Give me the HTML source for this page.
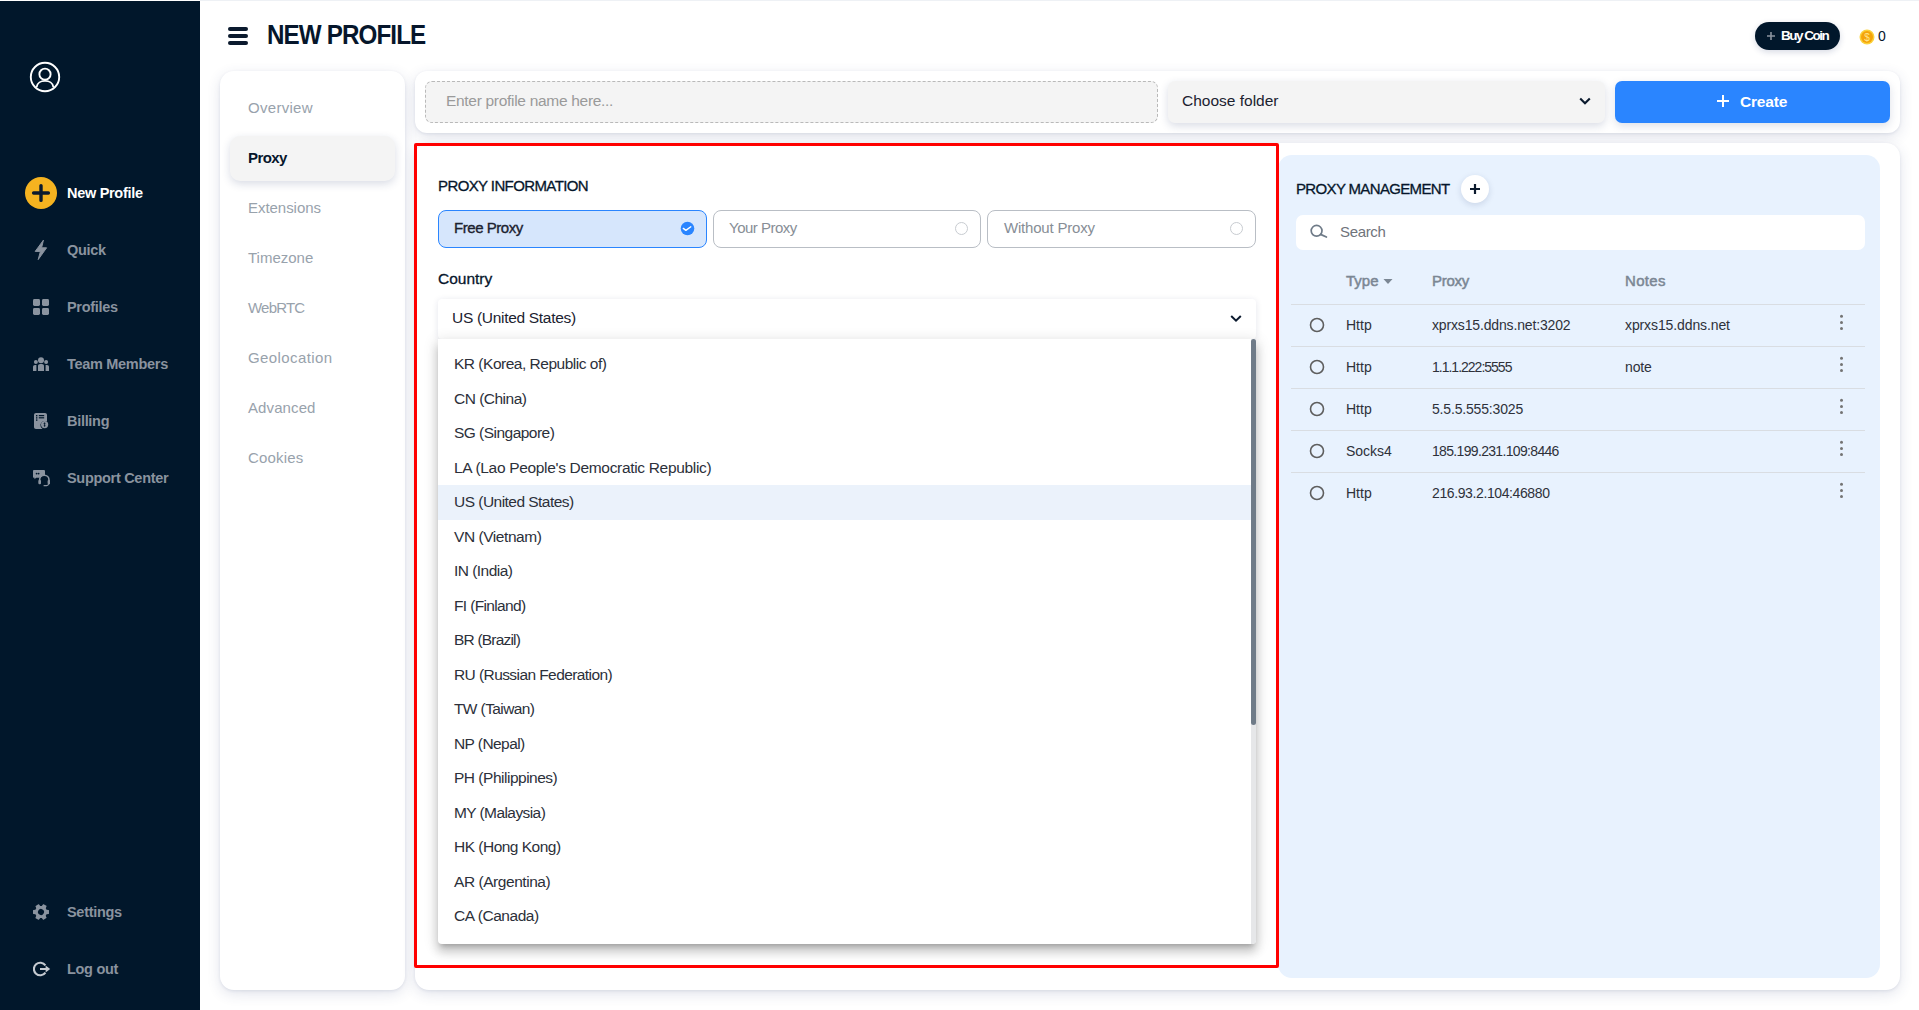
<!DOCTYPE html>
<html><head><meta charset="utf-8">
<style>
*{box-sizing:border-box;margin:0;padding:0}
html,body{width:1919px;height:1010px;overflow:hidden;background:#fff;font-family:"Liberation Sans",sans-serif;position:relative}
.a{position:absolute}
.t{position:absolute;white-space:nowrap;line-height:20px;height:20px}
#side{left:0;top:1px;width:200px;height:1009px;background:#01172b}
.sb{color:#8a939f;font-weight:bold;font-size:14.5px;left:67px;letter-spacing:-0.3px}
.card{background:#fff;border-radius:14px;box-shadow:0 1px 3px rgba(50,65,120,0.10),0 4px 14px rgba(50,65,120,0.14)}
.nav{color:#98a2ac;font-size:15px;left:248px;letter-spacing:0.1px}
</style></head><body>
<div class="a" style="left:200px;top:0;width:1719px;height:1px;background:#eef1f5"></div>
<div id="side" class="a"></div>


<!-- sidebar -->
<svg class="a" style="left:29px;top:61px" width="32" height="32" viewBox="0 0 32 32"><circle cx="16" cy="16" r="14.2" fill="none" stroke="#fff" stroke-width="1.9"/><circle cx="16" cy="13.2" r="5.6" fill="none" stroke="#fff" stroke-width="1.9"/><path d="M7.6 26.2 C8.6 17.8 23.4 17.8 24.4 26.2" fill="none" stroke="#fff" stroke-width="1.9"/></svg>
<svg class="a" style="left:25px;top:177px" width="32" height="32" viewBox="0 0 32 32"><circle cx="16" cy="16" r="16" fill="#f5b320"/><path d="M8.6 16H23.4M16 8.6V23.4" stroke="#0b1a2e" stroke-width="3.4" stroke-linecap="round"/></svg>
<div class="t" style="left:67px;top:183px;color:#fff;font-weight:bold;font-size:14.5px;letter-spacing:-0.3px">New Profile</div>

<svg class="a" style="left:34px;top:239px" width="14" height="22" viewBox="0 0 14 22"><path d="M9.4 1.2 L1.2 12.4 H6.4 L4.2 20.6 L12.6 8.8 H7.6 Z" fill="#8a939f" stroke="#8a939f" stroke-width="1" stroke-linejoin="round"/></svg>
<div class="t sb" style="top:240px">Quick</div>

<svg class="a" style="left:33px;top:299px" width="16" height="16" viewBox="0 0 16 16"><rect x="0" y="0" width="7" height="7" rx="1.4" fill="#8a939f"/><rect x="9" y="0" width="7" height="7" rx="1.4" fill="#8a939f"/><rect x="0" y="9" width="7" height="7" rx="1.4" fill="#8a939f"/><rect x="9" y="9" width="7" height="7" rx="1.4" fill="#8a939f"/></svg>
<div class="t sb" style="top:297px">Profiles</div>

<svg class="a" style="left:33px;top:357px" width="16" height="14" viewBox="0 0 16 14"><circle cx="8" cy="3.3" r="3" fill="#8a939f"/><circle cx="2.9" cy="5" r="2" fill="#8a939f"/><circle cx="13.1" cy="5" r="2" fill="#8a939f"/><path d="M5 14V9.2C5 7.8 5.8 7 7.2 7H8.8C10.2 7 11 7.8 11 9.2V14Z" fill="#8a939f"/><path d="M0 14V10C0 8.6 .8 7.9 2 7.9H3.4V14Z" fill="#8a939f"/><path d="M16 14V10C16 8.6 15.2 7.9 14 7.9H12.6V14Z" fill="#8a939f"/></svg>
<div class="t sb" style="top:354px">Team Members</div>

<svg class="a" style="left:34px;top:413px" width="16" height="17" viewBox="0 0 16 17"><path d="M2 0H11C12.2 0 13 .8 13 2V8.5A4.3 4.3 0 0 0 8.6 16H2C.8 16 0 15.2 0 14V2C0 .8.8 0 2 0Z" fill="#8a939f"/><rect x="2" y="2" width="1.4" height="1.4" fill="#01172b"/><rect x="2" y="4.2" width="1.4" height="1.4" fill="#01172b"/><rect x="2" y="6.4" width="1.4" height="1.4" fill="#01172b"/><rect x="4.8" y="2" width="5.4" height="1.2" fill="#01172b"/><rect x="4.8" y="4.2" width="5.4" height="1.2" fill="#01172b"/><circle cx="10.6" cy="11.6" r="3.6" fill="#8a939f"/><path d="M10.6 9.4V13.8M9.6 10.6H11.4M9.8 12.6H11.4" stroke="#01172b" stroke-width=".8"/></svg>
<div class="t sb" style="top:411px">Billing</div>

<svg class="a" style="left:33px;top:470px" width="17" height="17" viewBox="0 0 17 17"><path d="M1 0H10.8C11.5 0 12 .5 12 1.2V5.2C10 5.3 8.6 6.2 7.5 7.8H3.2L1.5 9.2V7.8H1C.4 7.8 0 7.4 0 6.8V1.2C0 .5.4 0 1 0Z" fill="#8a939f"/><circle cx="3.6" cy="3.6" r=".9" fill="#01172b"/><circle cx="5.6" cy="3.6" r=".9" fill="#01172b"/><path d="M6.6 13V10A4.7 4.7 0 0 1 16 10V13" fill="none" stroke="#8a939f" stroke-width="1.6"/><rect x="5.4" y="10" width="2.6" height="4.2" rx="1" fill="#8a939f"/><rect x="14.6" y="10" width="2.6" height="4.2" rx="1" fill="#8a939f"/><path d="M15.6 14A2 2 0 0 1 13.6 15.6H10.6" fill="none" stroke="#8a939f" stroke-width="1.2"/></svg>
<div class="t sb" style="top:468px">Support Center</div>

<svg class="a" style="left:31px;top:902px" width="20" height="20" viewBox="0 0 24 24"><path transform="rotate(30 12 12)" fill="#8a939f" d="M19.14 12.94c.04-.3.06-.61.06-.94 0-.32-.02-.64-.07-.94l2.03-1.58a.49.49 0 0 0 .12-.61l-1.92-3.32a.49.49 0 0 0-.59-.22l-2.39.96c-.5-.38-1.03-.7-1.62-.94l-.36-2.54a.48.48 0 0 0-.48-.41h-3.84c-.24 0-.43.17-.47.41l-.36 2.54c-.59.24-1.13.57-1.62.94l-2.39-.96a.48.48 0 0 0-.59.22L2.74 8.87c-.12.21-.08.47.12.61l2.03 1.58c-.05.3-.09.63-.09.94s.02.64.07.94l-2.03 1.58a.49.49 0 0 0-.12.61l1.92 3.32c.12.22.37.29.59.22l2.39-.96c.5.38 1.03.7 1.62.94l.36 2.54c.05.24.24.41.48.41h3.84c.24 0 .44-.17.47-.41l.36-2.54c.59-.24 1.13-.56 1.62-.94l2.39.96c.22.08.47 0 .59-.22l1.92-3.32c.12-.22.07-.47-.12-.61l-2.01-1.58zM12 15.6A3.6 3.6 0 1 1 12 8.4a3.6 3.6 0 0 1 0 7.2z"/></svg>
<div class="t sb" style="top:902px">Settings</div>

<svg class="a" style="left:33px;top:961px" width="18" height="16" viewBox="0 0 18 16"><path d="M12.4 4.4A6.3 6.3 0 1 0 12.4 11.6" fill="none" stroke="#c5cad1" stroke-width="2.1"/><path d="M7 8H13" stroke="#c5cad1" stroke-width="2"/><path d="M12.6 4.6L17.2 8L12.6 11.4Z" fill="#c5cad1"/></svg>
<div class="t sb" style="top:959px">Log out</div>

<!-- header -->
<div class="a" style="left:228px;top:27px;width:20px;height:4px;border-radius:2px;background:#0b1a2e"></div>
<div class="a" style="left:228px;top:34px;width:20px;height:4px;border-radius:2px;background:#0b1a2e"></div>
<div class="a" style="left:228px;top:41px;width:20px;height:4px;border-radius:2px;background:#0b1a2e"></div>
<div class="t" style="left:267px;top:21px;height:28px;line-height:28px;font-size:27.5px;font-weight:bold;color:#06162b;letter-spacing:-1px;transform:scaleX(0.88);transform-origin:0 0">NEW PROFILE</div>

<!-- cards -->
<div class="a card" style="left:220px;top:71px;width:185px;height:919px"></div>
<div class="a card" style="left:415px;top:71px;width:1485px;height:62px;border-radius:12px"></div>
<div class="a card" style="left:415px;top:143px;width:1485px;height:847px"></div>


<!-- left nav -->
<div class="a" style="left:230px;top:136px;width:165px;height:45px;border-radius:10px;background:#f4f4f4;box-shadow:0 3px 8px rgba(30,45,100,0.17)"></div>
<div class="t nav" style="top:98px;letter-spacing:0.29px">Overview</div>
<div class="t" style="left:248px;top:148px;font-size:15px;font-weight:bold;color:#06162b;letter-spacing:-0.6px">Proxy</div>
<div class="t nav" style="top:198px;letter-spacing:-0.04px">Extensions</div>
<div class="t nav" style="top:248px;letter-spacing:0px">Timezone</div>
<div class="t nav" style="top:298px;letter-spacing:-0.8px">WebRTC</div>
<div class="t nav" style="top:348px;letter-spacing:0.4px">Geolocation</div>
<div class="t nav" style="top:398px;letter-spacing:0.1px">Advanced</div>
<div class="t nav" style="top:448px;letter-spacing:0.17px">Cookies</div>

<!-- top bar -->
<div class="a" style="left:425px;top:81px;width:733px;height:42px;border-radius:7px;background:#f4f4f4;border:1.2px dashed #b9b9b9"></div>
<div class="t" style="left:446px;top:91px;font-size:15.5px;color:#9a9a9a;letter-spacing:-0.3px">Enter profile name here...</div>
<div class="a" style="left:1168px;top:81px;width:437px;height:42px;border-radius:7px;background:#f4f4f4;box-shadow:0 3px 8px rgba(30,45,100,0.17)"></div>
<div class="t" style="left:1182px;top:91px;font-size:15.5px;color:#1b2230">Choose folder</div>
<svg class="a" style="left:1578px;top:96px" width="14" height="10" viewBox="0 0 14 10"><path d="M2.2 2.5L7 7.3L11.8 2.5" fill="none" stroke="#0b1a2e" stroke-width="2.1"/></svg>
<div class="a" style="left:1615px;top:81px;width:275px;height:42px;border-radius:7px;background:#2a85ff;box-shadow:0 3px 8px rgba(30,45,100,0.15)"></div>
<svg class="a" style="left:1716px;top:94px" width="14" height="14" viewBox="0 0 14 14"><path d="M7 1V13M1 7H13" stroke="#fff" stroke-width="2"/></svg>
<div class="t" style="left:1740px;top:92px;font-size:15.5px;font-weight:bold;color:#fff;letter-spacing:-0.2px">Create</div>

<!-- buy coin -->
<div class="a" style="left:1755px;top:22px;width:85px;height:28px;border-radius:14px;background:#01172b;box-shadow:0 2px 6px rgba(30,45,100,0.18)"></div>
<svg class="a" style="left:1766px;top:31px" width="10" height="10" viewBox="0 0 10 10"><path d="M5 1V9M1 5H9" stroke="#8a939f" stroke-width="1.6"/></svg>
<div class="t" style="left:1781px;top:26px;font-size:13.5px;font-weight:bold;color:#fff;letter-spacing:-1.5px">Buy Coin</div>
<svg class="a" style="left:1859px;top:29px" width="16" height="16" viewBox="0 0 16 16"><circle cx="8" cy="8" r="7.5" fill="#fbd23c"/><circle cx="8" cy="8" r="6" fill="#f5a409"/><text x="8" y="11.6" font-size="10" font-family="Liberation Sans" text-anchor="middle" fill="#ffe58a">$</text></svg>
<div class="t" style="left:1878px;top:26px;font-size:14px;color:#06162b">0</div>



<!-- proxy management -->
<div class="a" style="left:1278px;top:155px;width:602px;height:823px;border-radius:14px;background:#e8f2fe"></div>
<div class="t" style="left:1296px;top:179px;font-size:15px;color:#06162b;letter-spacing:-0.65px;-webkit-text-stroke:0.3px #06162b">PROXY MANAGEMENT</div>
<div class="a" style="left:1461px;top:175px;width:28px;height:28px;border-radius:50%;background:#fff;box-shadow:0 2px 6px rgba(30,45,100,0.15)"></div>
<svg class="a" style="left:1469px;top:183px" width="12" height="12" viewBox="0 0 12 12"><path d="M6 1V11M1 6H11" stroke="#0b1a2e" stroke-width="2.2"/></svg>
<div class="a" style="left:1296px;top:215px;width:569px;height:35px;border-radius:7px;background:#fff"></div>
<svg class="a" style="left:1308px;top:222px" width="22" height="18" viewBox="0 0 22 18"><circle cx="8.6" cy="8.8" r="5.4" fill="none" stroke="#6f7b88" stroke-width="1.7"/><path d="M12.6 12.4L18.4 15" stroke="#6f7b88" stroke-width="1.8" stroke-linecap="round"/></svg>
<div class="t" style="left:1340px;top:222px;font-size:15px;color:#6f747b;letter-spacing:-0.35px">Search</div>
<div class="t" style="left:1346px;top:271px;font-size:15px;color:#7b8794;letter-spacing:0px;-webkit-text-stroke:0.5px #7b8794">Type</div>
<svg class="a" style="left:1383px;top:278px" width="10" height="7" viewBox="0 0 10 7"><path d="M0.5 1H9.5L5 6Z" fill="#7b8794"/></svg>
<div class="t" style="left:1432px;top:271px;font-size:15px;color:#7b8794;letter-spacing:-0.25px;-webkit-text-stroke:0.5px #7b8794">Proxy</div>
<div class="t" style="left:1625px;top:271px;font-size:15px;color:#7b8794;letter-spacing:0.3px;-webkit-text-stroke:0.5px #7b8794">Notes</div>
<div class="a" style="left:1291px;top:304px;width:574px;height:1px;background:#d9dde2"></div>
<svg class="a" style="left:1309px;top:317px" width="16" height="16" viewBox="0 0 16 16"><circle cx="8" cy="8" r="6.5" fill="none" stroke="#5e5e5e" stroke-width="1.6"/></svg>
<div class="t" style="left:1346px;top:315px;font-size:14px;color:#2e313a">Http</div>
<div class="t" style="left:1432px;top:315px;font-size:14px;color:#2e313a;letter-spacing:-0.15px">xprxs15.ddns.net:3202</div>
<div class="t" style="left:1625px;top:315px;font-size:14px;color:#2e313a;letter-spacing:-0.11px">xprxs15.ddns.net</div>
<svg class="a" style="left:1839px;top:313px" width="5" height="18" viewBox="0 0 5 18"><circle cx="2.5" cy="3.2" r="1.5" fill="#747474"/><circle cx="2.5" cy="9.5" r="1.5" fill="#747474"/><circle cx="2.5" cy="15.6" r="1.5" fill="#747474"/></svg>
<div class="a" style="left:1291px;top:346px;width:574px;height:1px;background:#d9dde2"></div>
<svg class="a" style="left:1309px;top:359px" width="16" height="16" viewBox="0 0 16 16"><circle cx="8" cy="8" r="6.5" fill="none" stroke="#5e5e5e" stroke-width="1.6"/></svg>
<div class="t" style="left:1346px;top:357px;font-size:14px;color:#2e313a">Http</div>
<div class="t" style="left:1432px;top:357px;font-size:14px;color:#2e313a;letter-spacing:-1.0px">1.1.1.222:5555</div>
<div class="t" style="left:1625px;top:357px;font-size:14px;color:#2e313a;letter-spacing:-0.15px">note</div>
<svg class="a" style="left:1839px;top:355px" width="5" height="18" viewBox="0 0 5 18"><circle cx="2.5" cy="3.2" r="1.5" fill="#747474"/><circle cx="2.5" cy="9.5" r="1.5" fill="#747474"/><circle cx="2.5" cy="15.6" r="1.5" fill="#747474"/></svg>
<div class="a" style="left:1291px;top:388px;width:574px;height:1px;background:#d9dde2"></div>
<svg class="a" style="left:1309px;top:401px" width="16" height="16" viewBox="0 0 16 16"><circle cx="8" cy="8" r="6.5" fill="none" stroke="#5e5e5e" stroke-width="1.6"/></svg>
<div class="t" style="left:1346px;top:399px;font-size:14px;color:#2e313a">Http</div>
<div class="t" style="left:1432px;top:399px;font-size:14px;color:#2e313a;letter-spacing:-0.17px">5.5.5.555:3025</div>
<svg class="a" style="left:1839px;top:397px" width="5" height="18" viewBox="0 0 5 18"><circle cx="2.5" cy="3.2" r="1.5" fill="#747474"/><circle cx="2.5" cy="9.5" r="1.5" fill="#747474"/><circle cx="2.5" cy="15.6" r="1.5" fill="#747474"/></svg>
<div class="a" style="left:1291px;top:430px;width:574px;height:1px;background:#d9dde2"></div>
<svg class="a" style="left:1309px;top:443px" width="16" height="16" viewBox="0 0 16 16"><circle cx="8" cy="8" r="6.5" fill="none" stroke="#5e5e5e" stroke-width="1.6"/></svg>
<div class="t" style="left:1346px;top:441px;font-size:14px;color:#2e313a">Socks4</div>
<div class="t" style="left:1432px;top:441px;font-size:14px;color:#2e313a;letter-spacing:-0.67px">185.199.231.109:8446</div>
<svg class="a" style="left:1839px;top:439px" width="5" height="18" viewBox="0 0 5 18"><circle cx="2.5" cy="3.2" r="1.5" fill="#747474"/><circle cx="2.5" cy="9.5" r="1.5" fill="#747474"/><circle cx="2.5" cy="15.6" r="1.5" fill="#747474"/></svg>
<div class="a" style="left:1291px;top:472px;width:574px;height:1px;background:#d9dde2"></div>
<svg class="a" style="left:1309px;top:485px" width="16" height="16" viewBox="0 0 16 16"><circle cx="8" cy="8" r="6.5" fill="none" stroke="#5e5e5e" stroke-width="1.6"/></svg>
<div class="t" style="left:1346px;top:483px;font-size:14px;color:#2e313a">Http</div>
<div class="t" style="left:1432px;top:483px;font-size:14px;color:#2e313a;letter-spacing:-0.39px">216.93.2.104:46880</div>
<svg class="a" style="left:1839px;top:481px" width="5" height="18" viewBox="0 0 5 18"><circle cx="2.5" cy="3.2" r="1.5" fill="#747474"/><circle cx="2.5" cy="9.5" r="1.5" fill="#747474"/><circle cx="2.5" cy="15.6" r="1.5" fill="#747474"/></svg>


<!-- proxy info -->
<div class="t" style="left:438px;top:176px;font-size:15px;color:#06162b;letter-spacing:-0.6px;-webkit-text-stroke:0.3px #06162b">PROXY INFORMATION</div>
<div class="a" style="left:438px;top:210px;width:269px;height:38px;border-radius:8px;background:#d6e6fc;border:1.5px solid #2a85ff"></div>
<div class="t" style="left:454px;top:218px;font-size:15px;color:#1b2230;letter-spacing:-0.45px;-webkit-text-stroke:0.35px #1b2230">Free Proxy</div>
<svg class="a" style="left:680px;top:221px" width="15" height="15" viewBox="0 0 15 15"><circle cx="7.5" cy="7.5" r="6.8" fill="#2a85ff"/><path d="M3.3 7.4L5.9 9.4L10.8 5.8" fill="none" stroke="#fff" stroke-width="1.4" stroke-linecap="round" stroke-linejoin="round"/></svg>
<div class="a" style="left:713px;top:210px;width:268px;height:38px;border-radius:8px;background:#fff;border:1px solid #b9bec5"></div>
<div class="t" style="left:729px;top:218px;font-size:15px;color:#878e96;letter-spacing:-0.5px">Your Proxy</div>
<svg class="a" style="left:954px;top:221px" width="15" height="15" viewBox="0 0 15 15"><circle cx="7.5" cy="7.5" r="6" fill="none" stroke="#c8ccd1" stroke-width="1"/></svg>
<div class="a" style="left:987px;top:210px;width:269px;height:38px;border-radius:8px;background:#fff;border:1px solid #b9bec5"></div>
<div class="t" style="left:1004px;top:218px;font-size:15px;color:#878e96;letter-spacing:-0.2px">Without Proxy</div>
<svg class="a" style="left:1229px;top:221px" width="15" height="15" viewBox="0 0 15 15"><circle cx="7.5" cy="7.5" r="6" fill="none" stroke="#c8ccd1" stroke-width="1"/></svg>

<div class="t" style="left:438px;top:269px;font-size:15.5px;color:#06162b;letter-spacing:0px;-webkit-text-stroke:0.3px #06162b">Country</div>
<div class="a" style="left:438px;top:299px;width:818px;height:40px;border-radius:4px;background:#fff;box-shadow:0 1px 6px rgba(30,45,100,0.12)"></div>
<div class="t" style="left:452px;top:308px;font-size:15.5px;color:#1b2230;letter-spacing:-0.3px">US (United States)</div>
<svg class="a" style="left:1229px;top:312px" width="14" height="12" viewBox="0 0 14 12"><path d="M2.2 4L7 8.6L11.8 4" fill="none" stroke="#0b1a2e" stroke-width="2"/></svg>

<!-- dropdown -->
<div class="a" style="left:438px;top:339px;width:818px;height:605px;border-radius:0 0 4px 4px;background:#fff;overflow:hidden;box-shadow:0 5px 5px -3px rgba(0,0,0,.2),0 8px 10px 1px rgba(0,0,0,.14),0 3px 14px 2px rgba(0,0,0,.12);z-index:3">
<div class="a" style="left:0;top:8.0px;width:813px;height:34.5px;"></div><div class="t" style="left:16px;top:15.25px;font-size:15.5px;color:#2c303a;letter-spacing:-0.49px">KR (Korea, Republic of)</div>
<div class="a" style="left:0;top:42.5px;width:813px;height:34.5px;"></div><div class="t" style="left:16px;top:49.75px;font-size:15.5px;color:#2c303a;letter-spacing:-0.51px">CN (China)</div>
<div class="a" style="left:0;top:77.0px;width:813px;height:34.5px;"></div><div class="t" style="left:16px;top:84.25px;font-size:15.5px;color:#2c303a;letter-spacing:-0.53px">SG (Singapore)</div>
<div class="a" style="left:0;top:111.5px;width:813px;height:34.5px;"></div><div class="t" style="left:16px;top:118.75px;font-size:15.5px;color:#2c303a;letter-spacing:-0.32px">LA (Lao People's Democratic Republic)</div>
<div class="a" style="left:0;top:146.0px;width:813px;height:34.5px;background:#ebf2fb;"></div><div class="t" style="left:16px;top:153.25px;font-size:15.5px;color:#2c303a;letter-spacing:-0.53px">US (United States)</div>
<div class="a" style="left:0;top:180.5px;width:813px;height:34.5px;"></div><div class="t" style="left:16px;top:187.75px;font-size:15.5px;color:#2c303a;letter-spacing:-0.44px">VN (Vietnam)</div>
<div class="a" style="left:0;top:215.0px;width:813px;height:34.5px;"></div><div class="t" style="left:16px;top:222.25px;font-size:15.5px;color:#2c303a;letter-spacing:-0.53px">IN (India)</div>
<div class="a" style="left:0;top:249.5px;width:813px;height:34.5px;"></div><div class="t" style="left:16px;top:256.75px;font-size:15.5px;color:#2c303a;letter-spacing:-0.64px">FI (Finland)</div>
<div class="a" style="left:0;top:284.0px;width:813px;height:34.5px;"></div><div class="t" style="left:16px;top:291.25px;font-size:15.5px;color:#2c303a;letter-spacing:-0.8px">BR (Brazil)</div>
<div class="a" style="left:0;top:318.5px;width:813px;height:34.5px;"></div><div class="t" style="left:16px;top:325.75px;font-size:15.5px;color:#2c303a;letter-spacing:-0.58px">RU (Russian Federation)</div>
<div class="a" style="left:0;top:353.0px;width:813px;height:34.5px;"></div><div class="t" style="left:16px;top:360.25px;font-size:15.5px;color:#2c303a;letter-spacing:-0.6px">TW (Taiwan)</div>
<div class="a" style="left:0;top:387.5px;width:813px;height:34.5px;"></div><div class="t" style="left:16px;top:394.75px;font-size:15.5px;color:#2c303a;letter-spacing:-0.57px">NP (Nepal)</div>
<div class="a" style="left:0;top:422.0px;width:813px;height:34.5px;"></div><div class="t" style="left:16px;top:429.25px;font-size:15.5px;color:#2c303a;letter-spacing:-0.49px">PH (Philippines)</div>
<div class="a" style="left:0;top:456.5px;width:813px;height:34.5px;"></div><div class="t" style="left:16px;top:463.75px;font-size:15.5px;color:#2c303a;letter-spacing:-0.58px">MY (Malaysia)</div>
<div class="a" style="left:0;top:491.0px;width:813px;height:34.5px;"></div><div class="t" style="left:16px;top:498.25px;font-size:15.5px;color:#2c303a;letter-spacing:-0.51px">HK (Hong Kong)</div>
<div class="a" style="left:0;top:525.5px;width:813px;height:34.5px;"></div><div class="t" style="left:16px;top:532.75px;font-size:15.5px;color:#2c303a;letter-spacing:-0.45px">AR (Argentina)</div>
<div class="a" style="left:0;top:560.0px;width:813px;height:34.5px;"></div><div class="t" style="left:16px;top:567.25px;font-size:15.5px;color:#2c303a;letter-spacing:-0.44px">CA (Canada)</div>

<div class="a" style="left:813px;top:0;width:5px;height:605px;background:#e6e7e9"></div>
<div class="a" style="left:813px;top:0;width:5px;height:386px;border-radius:3px;background:#6f7b88"></div>
</div>

<!-- red box -->
<div class="a" style="left:414px;top:143px;width:865px;height:825px;border:3px solid #ff0000;border-radius:2px;z-index:5"></div>
</body></html>
